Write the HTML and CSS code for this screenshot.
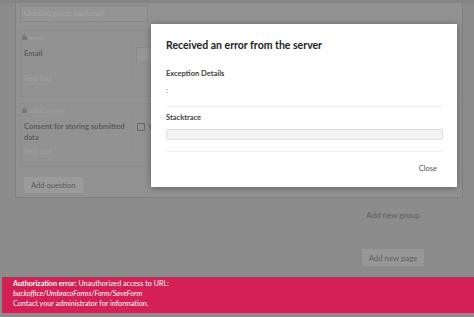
FILE: index.html
```html
<!DOCTYPE html>
<html>
<head>
<meta charset="utf-8">
<link rel="stylesheet" href="styles.css">
</head>
<body>
<div class="topband"></div>
<div class="page">
  <div class="group">
    <div class="group-name">Untitled group (optional)</div>

    <div class="question">
      <div class="alias"><svg class="lock" viewBox="0 0 6 7" width="5" height="6"><rect x="0.5" y="3" width="5" height="4" rx="0.6"/><path d="M1.6 3V2a1.4 1.4 0 0 1 2.8 0v1" fill="none" stroke-width="0.9"/></svg><span>email</span></div>
      <div class="qrow">
        <div class="qlabel">
          <div class="label">Email</div>
          <div class="help help-1">Help text</div>
        </div>
        <div class="qfield"><div class="textbox"></div></div>
      </div>
    </div>

    <div class="question q2">
      <div class="alias"><svg class="lock" viewBox="0 0 6 7" width="5" height="6"><rect x="0.5" y="3" width="5" height="4" rx="0.6"/><path d="M1.6 3V2a1.4 1.4 0 0 1 2.8 0v1" fill="none" stroke-width="0.9"/></svg><span>dataConsent</span></div>
      <div class="qrow">
        <div class="qlabel">
          <div class="label">Consent for storing submitted data</div>
          <div class="help help-2">Help text</div>
        </div>
        <div class="qfield check-field"><span class="checkbox"></span><span class="check-text">Yes</span></div>
      </div>
    </div>

    <button class="add-question">Add question</button>
  </div>

  <div class="actions">
    <div class="add-group">Add new group</div>
    <button class="add-page">Add new page</button>
  </div>
</div>

<div class="modal">
  <div class="modal-title">Received an error from the server</div>
  <div class="section-label first">Exception Details</div>
  <div class="colon">:</div>
  <div class="divider"></div>
  <div class="section-label">Stacktrace</div>
  <div class="stack-box"></div>
  <div class="divider second"></div>
  <div class="modal-footer"><button class="close-btn">Close</button></div>
</div>

<div class="notify">
  <div><strong>Authorization error:</strong> Unauthorized access to URL:</div>
  <div class="url">backoffice/UmbracoForms/Form/SaveForm</div>
  <div>Contact your administrator for information.</div>
</div>
</body>
</html>
```
FILE: styles.css
```css
* { box-sizing: border-box; }

body {
  margin: 0;
  width: 474px;
  height: 317px;
  overflow: hidden;
  position: relative;
  background: #8c8c8c;
  font-family: Lato, "Open Sans", "Liberation Sans", sans-serif;
}

.topband {
  height: 3px;
  background: #858585;
}

.page {
  display: flex;
  flex-direction: column;
  padding: 0 11px 0 15px;
}

.group {
  display: flex;
  flex-direction: column;
  border: 1px solid #808080;
  border-top: none;
  background: #929292;
  padding: 2px 4px 4px 4px;
}

.group-name {
  width: 128px;
  height: 17px;
  border: 1px solid #888888;
  background: #949494;
  color: #a5a5a5;
  font-size: 7.5px;
  line-height: 15px;
  padding-left: 3px;
}

.question {
  margin-top: 8px;
  border: 1px solid #8d8d8d;
  padding: 1px 0 13px 0;
}

.question.q2 {
  margin-top: 6px;
  padding-bottom: 10px;
}

.alias {
  display: flex;
  align-items: center;
  gap: 2px;
  height: 10px;
  padding-left: 1px;
  font-size: 6.5px;
  color: #a2a2a2;
}

.lock { fill: #777777; stroke: #777777; }

.qrow {
  display: flex;
  align-items: flex-start;
}

.qlabel {
  width: 111px;
  padding-left: 3px;
  border-right: 1px solid #8f8f8f;
}

.label {
  margin-top: 6px;
  font-size: 7.6px;
  line-height: 11px;
  font-weight: 700;
  color: #5d5d5d;
  width: 104px;
}

.help {
  font-size: 6.8px;
  line-height: 10px;
  color: #a3a3a3;
}

.help-1 { margin-top: 14px; }
.help-2 { margin-top: 3px; }

.qfield {
  padding-left: 4px;
  flex: 1;
}

.textbox {
  margin-top: 5px;
  height: 16px;
  border: 1px solid #8a8a8a;
  background: #969696;
}

.check-field {
  display: flex;
  align-items: center;
  gap: 3px;
  margin-top: 6px;
  height: 11px;
  padding-left: 5px;
}

.checkbox {
  width: 8px;
  height: 8px;
  border: 1px solid #666666;
  border-radius: 1px;
}

.check-text {
  font-size: 8px;
  color: #5d5d5d;
}

.add-question {
  align-self: flex-start;
  margin: 10px 0 0 4px;
  height: 16px;
  padding: 0 7px;
  border: none;
  background: #9b9b9b;
  color: #5b5b5b;
  font-family: inherit;
  font-size: 7.6px;
}

.actions {
  align-self: flex-end;
  margin-right: 35px;
  width: 70px;
  display: flex;
  flex-direction: column;
  align-items: center;
}

.add-group {
  margin-top: 12px;
  font-size: 8px;
  line-height: 10px;
  color: #5f5f5f;
}

.add-page {
  margin-top: 29px;
  height: 17px;
  padding: 0 7px;
  border: none;
  background: #979797;
  color: #5f5f5f;
  font-family: inherit;
  font-size: 7.8px;
}

.modal {
  position: absolute;
  left: 151px;
  top: 24px;
  width: 306px;
  height: 163px;
  background: #ffffff;
  box-shadow: 0 1px 7px rgba(0, 0, 0, 0.35);
  padding: 14px 14px 0 15px;
  display: flex;
  flex-direction: column;
}

.modal-title {
  font-size: 10.5px;
  line-height: 14px;
  font-weight: 700;
  color: #222222;
}

.section-label {
  margin-top: 6px;
  font-size: 7.5px;
  line-height: 10px;
  font-weight: 700;
  color: #3d3d3d;
}

.section-label.first { margin-top: 17px; }

.colon {
  margin-top: 6px;
  font-size: 7px;
  line-height: 10px;
  color: #555555;
}

.divider {
  margin-top: 11px;
  border-top: 1px solid #efefef;
}

.stack-box {
  margin-top: 6px;
  height: 11px;
  background: #f3f3f3;
  border: 1px solid #dfdfdf;
  border-radius: 2px;
}

.modal-footer {
  margin-top: 12px;
  display: flex;
  justify-content: flex-end;
}

.close-btn {
  border: none;
  background: none;
  padding: 0 6px;
  height: 10px;
  line-height: 10px;
  font-family: inherit;
  font-size: 7.5px;
  color: #555555;
}

.notify {
  position: absolute;
  left: 2px;
  right: 0;
  top: 277px;
  height: 36px;
  background: #d42054;
  color: #ffffff;
  font-size: 7.2px;
  line-height: 10px;
  padding: 2px 11px 4px;
}

.notify strong { font-weight: 700; }
.notify .url { font-style: italic; }
```
